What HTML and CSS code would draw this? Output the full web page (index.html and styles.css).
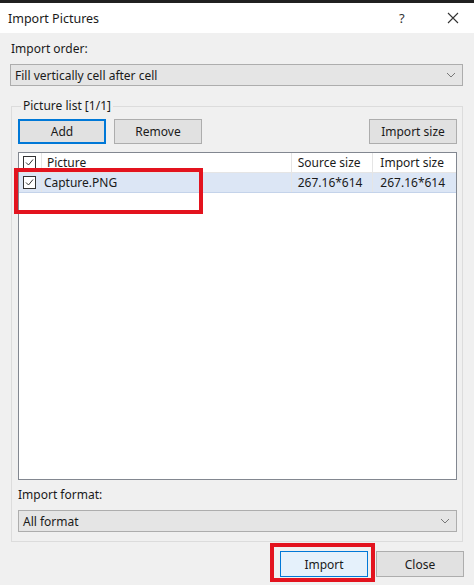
FILE: index.html
```html
<!DOCTYPE html>
<html lang="en">
<head>
    <meta charset="UTF-8">
    <title>Import Pictures</title>
    <link rel="stylesheet" href="styles.css">
</head>
<body>
<div class="dialog">
    <div class="topstrip"></div>
    <div class="titlebar">
        <span class="title">Import Pictures</span>
        <span class="help">?</span>
        <svg class="close-x" width="12" height="12" viewBox="0 0 12 12"><path d="M1 1L11 11M11 1L1 11" stroke="#333" stroke-width="1.1" fill="none"/></svg>
    </div>
    <div class="content">
        <div class="label first">Import order:</div>
        <div class="combo wide">
            <span>Fill vertically cell after cell</span>
            <svg class="chev" width="10" height="6" viewBox="0 0 10 6"><path d="M1 1L5 5L9 1" stroke="#777" fill="none"/></svg>
        </div>

        <fieldset class="group">
            <legend>Picture list [1/1]</legend>
            <div class="toolbar">
                <button class="btn default">Add</button>
                <button class="btn">Remove</button>
                <button class="btn right">Import size</button>
            </div>
            <div class="list">
                <div class="row head">
                    <div class="cell check"><span class="box"><svg width="11" height="11" viewBox="0 0 11 11"><path d="M2 5.5L4.5 8L9 2.5" stroke="#333" fill="none"/></svg></span></div>
                    <div class="cell name">Picture</div>
                    <div class="cell src">Source size</div>
                    <div class="cell imp">Import size</div>
                </div>
                <div class="row sel">
                    <div class="cell check"><span class="box"><svg width="11" height="11" viewBox="0 0 11 11"><path d="M2 5.5L4.5 8L9 2.5" stroke="#333" fill="none"/></svg></span></div>
                    <div class="cell name file">Capture.PNG</div>
                    <div class="cell src">267.16*614</div>
                    <div class="cell imp">267.16*614</div>
                </div>
            </div>
            <div class="label">Import format:</div>
            <div class="combo">
                <span>All format</span>
                <svg class="chev" width="10" height="6" viewBox="0 0 10 6"><path d="M1 1L5 5L9 1" stroke="#777" fill="none"/></svg>
            </div>
        </fieldset>

        <div class="footer">
            <button class="btn focus">Import</button>
            <button class="btn">Close</button>
        </div>
    </div>

    <!-- annotation boxes drawn over the screenshot -->
    <div class="mark mark-row"></div>
    <div class="mark mark-import"></div>
</div>
</body>
</html>
```
FILE: styles.css
```css
body {
    margin: 0;
    background: #f0f0f0;
    font-family: "Noto Sans", "Open Sans", sans-serif;
    font-size: 12px;
    color: #1a1a1a;
}
.dialog {
    position: relative;
    width: 474px;
    height: 585px;
    overflow: hidden;
}
.topstrip {
    height: 3px;
    background: #202020;
}
.titlebar {
    height: 30px;
    background: #fff;
    display: flex;
    align-items: center;
    padding-left: 8px;
    font-size: 12.5px;
}
.title {
    flex: 1;
}
.help {
    width: 12px;
    margin-right: 36px;
    font-size: 13px;
    color: #333;
}
.close-x {
    margin-right: 15px;
}
.content {
    padding: 0 11px 0 10px;
}
.label {
    height: 18px;
    line-height: 18px;
    margin-top: 6px;
    margin-bottom: 6px;
}
.label.first {
    margin-top: 7px;
    margin-left: 1px;
}
.combo {
    height: 20px;
    border: 1px solid #adadad;
    background: #e5e5e5;
    display: flex;
    align-items: center;
    padding-left: 4px;
    padding-right: 6px;
}
.combo span {
    flex: 1;
}
.group {
    margin: 13px 0 0 1px;
    padding: 3px 5px 9px 6px;
    border: 1px solid #dcdcdc;
    min-width: 0;
}
.group legend {
    padding: 0 2px;
    margin-left: 3px;
    line-height: 14px;
}
.toolbar {
    display: flex;
    gap: 8px;
    padding-top: 3px;
}
.btn {
    font-family: inherit;
    font-size: 12px;
    color: #1a1a1a;
    width: 88px;
    height: 25px;
    border: 1px solid #adadad;
    background: #e1e1e1;
    padding: 0;
}
.btn.default {
    border: 2px solid #0078d7;
}
.btn.right {
    margin-left: auto;
}
.list {
    margin-top: 8px;
    height: 326px;
    border: 1px solid #828790;
    background: #fff;
}
.row {
    display: flex;
    height: 19px;
    align-items: center;
}
.row.head {
    height: 19px;
    border-bottom: 1px solid #e5e5e5;
}
.row.sel {
    background: #dce6f5;
    border-bottom: 1px solid #c4d3ea;
}
.cell {
    height: 100%;
    display: flex;
    align-items: center;
    border-right: 1px solid #e5e5e5;
    box-sizing: border-box;
}
.cell.check {
    width: 23px;
    padding-left: 4px;
}
.cell.name {
    width: 251px;
    padding-left: 5px;
}
.cell.name.file {
    padding-left: 2px;
}
.cell.src {
    width: 82px;
    padding-left: 6px;
}
.cell.imp {
    width: 83px;
    padding-left: 7px;
    border-right: none;
}
.box {
    width: 11px;
    height: 11px;
    border: 1px solid #333;
    background: #fff;
    display: flex;
}
.footer {
    display: flex;
    justify-content: flex-end;
    gap: 8px;
    margin-top: 9px;
    margin-right: -1px;
}
.footer .btn {
    height: 26px;
}
.btn.focus {
    background: #e5f1fb;
    border-color: #0078d7;
}
.mark {
    position: absolute;
    border: 4px solid #e3131e;
}
.mark-row {
    left: 14px;
    top: 168px;
    width: 181px;
    height: 38px;
}
.mark-import {
    left: 270px;
    top: 543px;
    width: 97px;
    height: 31px;
}
```
